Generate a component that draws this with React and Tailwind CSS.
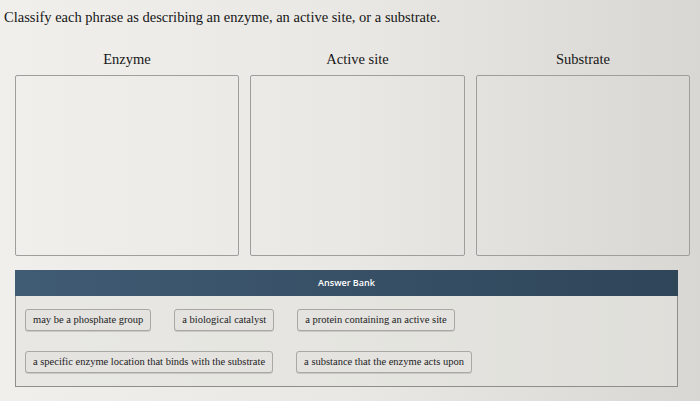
import React from 'react';

const bins = [
  { label: 'Enzyme', width: 'w-[224px]' },
  { label: 'Active site', width: 'w-[215px]' },
  { label: 'Substrate', width: 'w-[214px]' },
];

const firstRow = ['may be a phosphate group', 'a biological catalyst', 'a protein containing an active site'];
const secondRow = ['a specific enzyme location that binds with the substrate', 'a substance that the enzyme acts upon'];

const Chip = ({ text }) => (
  <div className="rounded-[3px] border border-[#a9a8a5] bg-[#e4e3e0] px-[7px] py-[4px] text-[10.5px] leading-[12px] text-[#222] shadow-[0_1px_0_#c9c8c5]">
    {text}
  </div>
);

export default function App() {
  return (
    <div
      className="h-[401px] w-[700px] overflow-hidden bg-linear-to-r from-[#f0efec] via-[#e9e8e4] to-[#d9d7d3] font-['Liberation_Serif',serif] text-[#161616]"
    >
      <p className="pl-[4px] pt-[9px] text-[14.5px] leading-[16px]">
        Classify each phrase as describing an enzyme, an active site, or a substrate.
      </p>

      {/* drop targets */}
      <div className="mt-[26px] flex gap-[11px] pl-[15px]">
        {bins.map((bin) => (
          <div key={bin.label} className={`flex flex-col ${bin.width}`}>
            <div className="text-center text-[14.5px] leading-[16px]">{bin.label}</div>
            <div className="mt-[8px] h-[181px] rounded-[2px] border-[1.5px] border-[#9f9e9c]" />
          </div>
        ))}
      </div>

      {/* answer bank */}
      <div className="ml-[15px] mt-[14px] w-[663px]">
        <div className="flex h-[26px] items-center justify-center bg-linear-to-r from-[#405b74] to-[#2f4659] font-['Open_Sans',sans-serif] text-[9px] font-semibold text-white">
          Answer Bank
        </div>
        <div className="flex h-[91px] flex-col gap-[20px] border border-t-0 border-[#8f8e8c] bg-[#e3e2de]/60 px-[9px] pt-[13px]">
          <div className="flex gap-[23px]">
            {firstRow.map((t) => (
              <Chip key={t} text={t} />
            ))}
          </div>
          <div className="flex gap-[23px]">
            {secondRow.map((t) => (
              <Chip key={t} text={t} />
            ))}
          </div>
        </div>
      </div>
    </div>
  );
}
